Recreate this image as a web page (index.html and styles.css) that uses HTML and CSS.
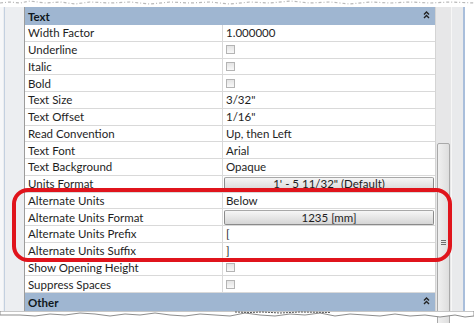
FILE: index.html
```html
<!DOCTYPE html>
<html>
<head>
<meta charset="utf-8">
<link rel="stylesheet" href="styles.css">
</head>
<body>
<div class="shot">
  <svg class="edge edge-top" viewBox="0 0 474 7" preserveAspectRatio="none">
    <polyline points="0,3 10,2 20,3 30,1 45,3 60,2 75,4 90,2 110,3 130,2 150,4 170,2 190,3 210,2 230,4 250,2 270,3 290,1 310,3 330,2 350,4 370,2 390,3 410,2 430,3 450,2 474,3" fill="none" stroke="#b9b9b9" stroke-width="1.2" stroke-dasharray="3 2 1 2"/>
  </svg>
  <div class="panel">
    <div class="gutter"><div class="gutter-line"></div></div>
    <div class="grid">
      <div class="cat"><span>Text</span><svg class="chev" viewBox="0 0 7 8"><path d="M1 3.5 L3.5 1 L6 3.5 M1 7 L3.5 4.5 L6 7" fill="none" stroke="#222" stroke-width="1.4"/></svg></div>
      <div class="row"><div class="name">Width Factor</div><div class="val">1.000000</div></div>
      <div class="row"><div class="name">Underline</div><div class="val"><span class="cb"></span></div></div>
      <div class="row"><div class="name">Italic</div><div class="val"><span class="cb"></span></div></div>
      <div class="row"><div class="name">Bold</div><div class="val"><span class="cb"></span></div></div>
      <div class="row"><div class="name">Text Size</div><div class="val">3/32"</div></div>
      <div class="row"><div class="name">Text Offset</div><div class="val">1/16"</div></div>
      <div class="row"><div class="name">Read Convention</div><div class="val">Up, then Left</div></div>
      <div class="row"><div class="name">Text Font</div><div class="val">Arial</div></div>
      <div class="row"><div class="name">Text Background</div><div class="val">Opaque</div></div>
      <div class="row"><div class="name">Units Format</div><div class="val btncell"><span class="btn">1' - 5 11/32" (Default)</span></div></div>
      <div class="row"><div class="name">Alternate Units</div><div class="val">Below</div></div>
      <div class="row"><div class="name">Alternate Units Format</div><div class="val btncell"><span class="btn">1235 [mm]</span></div></div>
      <div class="row"><div class="name">Alternate Units Prefix</div><div class="val">[</div></div>
      <div class="row"><div class="name">Alternate Units Suffix</div><div class="val">]</div></div>
      <div class="row"><div class="name">Show Opening Height</div><div class="val"><span class="cb"></span></div></div>
      <div class="row"><div class="name">Suppress Spaces</div><div class="val"><span class="cb"></span></div></div>
      <div class="cat"><span>Other</span><svg class="chev" viewBox="0 0 7 8"><path d="M1 3.5 L3.5 1 L6 3.5 M1 7 L3.5 4.5 L6 7" fill="none" stroke="#222" stroke-width="1.4"/></svg></div>
    </div>
    <div class="scroll">
      <div class="thumb"><span class="grip"></span></div>
    </div>
    <div class="frame"></div>
    <div class="frame-line"></div>
  </div>
  <svg class="edge edge-bottom" viewBox="0 0 474 12" preserveAspectRatio="none">
    <polygon points="0,0 474,0 474,5 465,6 455,4 440,6 425,4 410,5 395,3 380,5 365,4 350,3 335,5 320,2 305,4 290,3 275,5 260,4 245,2 230,5 215,4 200,3 185,5 170,4 155,2 140,4 125,3 110,5 95,3 80,2 65,4 50,3 35,5 20,4 0,4" fill="#ffffff" stroke="#8d8d8d" stroke-width="1"/>
    <polyline points="235,1 250,1.5 262,1 280,2 300,1 330,1.5" fill="none" stroke="#555" stroke-width="1" stroke-dasharray="2 1"/>
  </svg>
  <div class="annot"></div>
</div>
</body>
</html>
```
FILE: styles.css
```css
html, body {
  margin: 0;
  padding: 0;
  background: #ffffff;
}
.shot {
  position: relative;
  width: 474px;
  height: 323px;
  overflow: hidden;
  font-family: Lato, "Noto Sans", sans-serif;
  font-size: 11.5px;
  color: #1e1e1e;
}
.edge {
  display: block;
  width: 474px;
}
.edge-top {
  height: 7px;
}
.edge-bottom {
  height: 12px;
}
.panel {
  display: flex;
  height: 304px;
}
.gutter {
  width: 24px;
  background: #eceef1;
  border-left: 3px solid #f6f7f9;
  box-sizing: border-box;
  display: flex;
}
.gutter-line {
  width: 1px;
  margin-left: 1px;
  background: #c3d0e0;
}
.grid {
  width: 411px;
  border-left: 1px solid #9c9c9c;
  box-sizing: border-box;
  background: #ffffff;
  display: flex;
  flex-direction: column;
}
.cat {
  height: 18px;
  flex: none;
  background: #9fb6d1;
  display: flex;
  align-items: center;
  justify-content: space-between;
  padding: 0 5px 0 3px;
  font-weight: bold;
  color: #101820;
}
.chev {
  width: 7px;
  height: 8px;
  margin-top: -2px;
}
.row {
  height: 16.75px;
  flex: none;
  box-sizing: border-box;
  border-bottom: 1px solid #d9d9d9;
  display: flex;
}
.name {
  width: 198px;
  box-sizing: border-box;
  border-right: 1px solid #d9d9d9;
  padding-left: 3px;
  display: flex;
  align-items: center;
}
.val {
  flex: 1;
  padding-left: 3px;
  display: flex;
  align-items: center;
}
.btncell {
  padding: 1px 1px 0 1px;
  align-items: stretch;
}
.btn {
  flex: 1;
  border: 1px solid #8a8a8a;
  border-top-color: #a8a8a8;
  border-radius: 2px;
  background: linear-gradient(#f6f6f6, #e6e6e6 50%, #d6d6d6);
  display: flex;
  align-items: center;
  justify-content: center;
  font-size: 11.5px;
  line-height: 1;
}
.cb {
  width: 7px;
  height: 7px;
  border: 1px solid #b4b4b4;
  background: linear-gradient(#e4e4e4, #f8f8f8);
}
.scroll {
  width: 16px;
  background: #e7e7e8;
  border-left: 1px solid #d4d4d4;
  box-sizing: border-box;
  padding: 136px 1px 0 1px;
  display: flex;
  flex-direction: column;
}
.thumb {
  flex: 1;
  margin-bottom: -100px;
  border: 1px solid #a9a9a9;
  border-radius: 2px;
  background: linear-gradient(90deg, #f0f0f0, #dedede);
  display: flex;
  justify-content: center;
  padding-top: 96px;
}
.grip {
  width: 5px;
  height: 5px;
  background: repeating-linear-gradient(#6e6e6e 0 1px, transparent 1px 2px);
}
.frame {
  width: 12px;
  background: #e9eaec;
  border-left: 1px solid #f7f7f7;
  box-sizing: border-box;
}
.frame-line {
  width: 2px;
  background: #a9bedb;
}
.annot {
  position: absolute;
  left: 12px;
  top: 188px;
  width: 440px;
  height: 74px;
  box-sizing: border-box;
  border: 4px solid #e0141c;
  border-radius: 16px;
}
```
